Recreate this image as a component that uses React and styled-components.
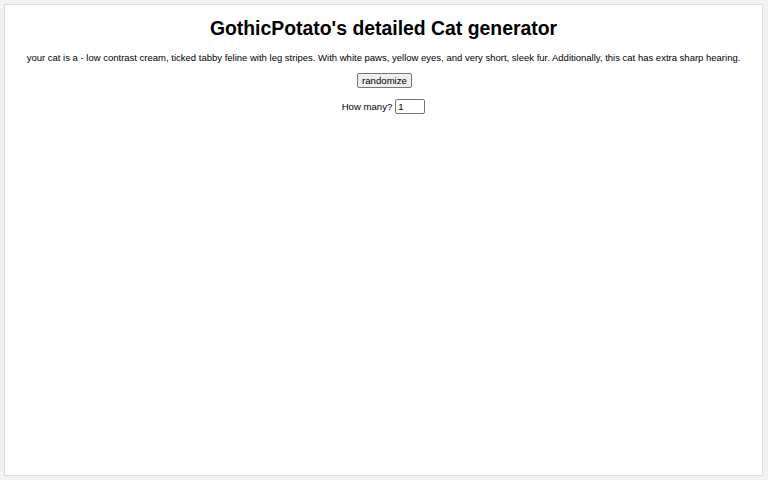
import React, { useState } from "react";
import styled, { createGlobalStyle } from "styled-components";

const Global = createGlobalStyle`
  html, body { margin: 0; padding: 0; background: #f2f2f2; }
  body { font-family: "Liberation Sans", Arial, sans-serif; color: #000; }
`;

const Page = styled.div`
  box-sizing: border-box;
  height: 480px;
  padding: 4px 5px 4px 4px;
  display: flex;
`;

const Panel = styled.main`
  flex: 1;
  background: #fff;
  border: 1px solid #dcdcdc;
  box-shadow: 0 0 1px rgba(0, 0, 0, 0.06);
  display: flex;
  flex-direction: column;
  align-items: center;
  padding-top: 12px;
`;

const Title = styled.h1`
  margin: 0;
  font-size: 19.4px;
  font-weight: bold;
  line-height: 23px;
`;

const Description = styled.p`
  margin: 12px 0 0;
  font-size: 9.5px;
  line-height: 12px;
`;

const RandomizeButton = styled.button`
  margin: 9px 0 0 2px;
  font-family: "Liberation Sans", Arial, sans-serif;
  font-size: 9.6px;
  line-height: 11px;
  padding: 1px 4px;
  background: #efefef;
  border: 1px solid #767676;
  border-radius: 2px;
  color: #000;
`;

const CountRow = styled.label`
  margin-top: 11px;
  font-size: 9.6px;
  display: flex;
  align-items: center;
  gap: 3px;
`;

const CountInput = styled.input`
  box-sizing: border-box;
  width: 30px;
  height: 15px;
  font-family: "Liberation Sans", Arial, sans-serif;
  font-size: 9.6px;
  padding: 0 2px;
  border: 1px solid #767676;
  border-radius: 2px;
`;

export default function App() {
  const [count, setCount] = useState("1");
  return (
    <>
      <Global />
      <Page>
        <Panel>
          <Title>GothicPotato's detailed Cat generator</Title>
          <Description>
            your cat is a - low contrast cream, ticked tabby feline with leg stripes. With white paws, yellow eyes, and very short, sleek fur. Additionally, this cat has extra sharp hearing.
          </Description>
          <RandomizeButton type="button">randomize</RandomizeButton>
          <CountRow>
            How many?
            <CountInput value={count} onChange={(e) => setCount(e.target.value)} />
          </CountRow>
        </Panel>
      </Page>
    </>
  );
}
